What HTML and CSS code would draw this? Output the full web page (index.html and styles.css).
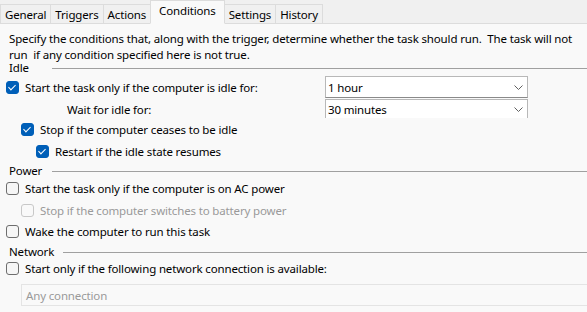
FILE: index.html
```html
<!DOCTYPE html>
<html lang="en">
<head>
    <meta charset="UTF-8">
    <title>Conditions</title>
    <link rel="stylesheet" href="styles.css">
</head>
<body>
    <div class="tabs">
        <div class="tab">General</div>
        <div class="tab">Triggers</div>
        <div class="tab">Actions</div>
        <div class="tab active">Conditions</div>
        <div class="tab">Settings</div>
        <div class="tab">History</div>
        <div class="tab-fill"></div>
    </div>
    <div class="panel">
        <p class="desc">Specify the conditions that, along with the trigger, determine whether the task should run.&nbsp; The task will not<br>run&nbsp; if any condition specified here is not true.</p>

        <div class="group-title idle"><span>Idle</span><div class="rule"></div></div>
        <div class="row field first">
            <label class="check"><span class="box checked"></span>Start the task only if the computer is idle for:</label>
            <div class="select">1 hour<svg width="9" height="5" viewBox="0 0 9 5"><polyline points="0.5,0.5 4.5,4.5 8.5,0.5" fill="none" stroke="#606060" stroke-width="1"/></svg></div>
        </div>
        <div class="row field second">
            <span class="sub-label">Wait for idle for:</span>
            <div class="select clipped">30 minutes<svg width="9" height="5" viewBox="0 0 9 5"><polyline points="0.5,0.5 4.5,4.5 8.5,0.5" fill="none" stroke="#606060" stroke-width="1"/></svg></div>
        </div>
        <div class="row level1 stop-idle">
            <label class="check"><span class="box checked"></span>Stop if the computer ceases to be idle</label>
        </div>
        <div class="row level2 restart">
            <label class="check"><span class="box checked"></span>Restart if the idle state resumes</label>
        </div>

        <div class="group-title power"><span>Power</span><div class="rule"></div></div>
        <div class="row ac">
            <label class="check"><span class="box"></span>Start the task only if the computer is on AC power</label>
        </div>
        <div class="row level1 battery">
            <label class="check disabled"><span class="box"></span>Stop if the computer switches to battery power</label>
        </div>
        <div class="row wake">
            <label class="check"><span class="box"></span>Wake the computer to run this task</label>
        </div>

        <div class="group-title network"><span>Network</span><div class="rule"></div></div>
        <div class="row net">
            <label class="check"><span class="box"></span>Start only if the following network connection is available:</label>
        </div>
        <div class="select wide disabled">Any connection<svg width="9" height="5" viewBox="0 0 9 5"><polyline points="0.5,0.5 4.5,4.5 8.5,0.5" fill="none" stroke="#b0b0b0" stroke-width="1"/></svg></div>
    </div>
</body>
</html>
```

FILE: styles.css
```css
body {
    margin: 0;
    font-family: "Noto Sans", "Open Sans", sans-serif;
    font-size: 11.5px;
    letter-spacing: -0.15px;
    color: #000000;
    background-color: #f9f9f9;
    overflow: hidden;
}

.tabs {
    display: flex;
    align-items: flex-end;
    height: 24px;
    background-color: #f0f0f0;
}

.tab {
    height: 20px;
    line-height: 19px;
    padding: 0 4px;
    border: 1px solid #dcdcdc;
    margin-right: -1px;
    background-color: #f0f0f0;
    box-sizing: border-box;
    white-space: nowrap;
}

.tab.active {
    height: 24px;
    line-height: 20px;
    padding: 0 8px;
    background-color: #f9f9f9;
    border-bottom-color: #f9f9f9;
    position: relative;
    z-index: 1;
}

.tab-fill {
    flex: 1;
    height: 1px;
    background-color: #dcdcdc;
}

.panel {
    padding-left: 6px;
}

.desc {
    margin: 7px 0 0 3px;
    line-height: 16px;
    white-space: nowrap;
}

.group-title {
    display: flex;
    align-items: center;
    height: 10px;
    line-height: 10px;
    padding-left: 3px;
}

.group-title span {
    min-width: 34px;
    margin-right: 9px;
}

.group-title .rule {
    flex: 1;
    height: 1px;
    background-color: #a0a0a0;
}

.row {
    display: flex;
    align-items: center;
    height: 18px;
}

.row.field {
    display: grid;
    grid-template-columns: 319px 203px;
    height: 22px;
}

.row.first { margin-top: 3px; }
.row.second { margin-top: 1px; height: 21px; align-items: start; }
.row.stop-idle { margin-top: 0; }
.row.restart { margin-top: 4px; }
.group-title.power { margin-top: 6px; }
.row.ac { margin-top: 3px; }
.row.battery { margin-top: 4px; }
.row.wake { margin-top: 3px; }
.group-title.network { margin-top: 7px; }
.row.net { margin-top: 2px; }

.level1 { padding-left: 15px; }
.level2 { padding-left: 30px; }

.sub-label {
    padding-left: 61px;
}

.row.second .sub-label {
    line-height: 21px;
}

.check {
    display: flex;
    align-items: center;
    white-space: nowrap;
}

.box {
    width: 13px;
    height: 13px;
    box-sizing: border-box;
    border: 1px solid #6e6e6e;
    border-radius: 3px;
    background-color: #f6f6f6;
    margin-right: 6px;
    position: relative;
}

.box.checked {
    background-color: #005fb8;
    border-color: #005fb8;
}

.box.checked::after {
    content: "";
    position: absolute;
    left: 3px;
    top: 1px;
    width: 3px;
    height: 6px;
    border: solid #ffffff;
    border-width: 0 1px 1px 0;
    transform: rotate(45deg);
}

.check.disabled {
    color: #9a9a9a;
}

.check.disabled .box {
    border-color: #c8c8c8;
    background-color: #f9f9f9;
}

.select {
    display: flex;
    align-items: center;
    justify-content: space-between;
    height: 22px;
    box-sizing: border-box;
    padding: 0 4px 0 2px;
    background-color: #ffffff;
    border: 1px solid #b8b8b8;
    border-bottom-color: #8a8a8a;
}

.select.clipped {
    height: 19px;
    border-bottom: none;
}

.select.wide {
    margin: 7px 0 0 15px;
    width: 580px;
    padding-left: 4px;
}

.select.disabled {
    background-color: #f9f9f9;
    border-color: #e4e4e4;
    color: #9a9a9a;
}
```
